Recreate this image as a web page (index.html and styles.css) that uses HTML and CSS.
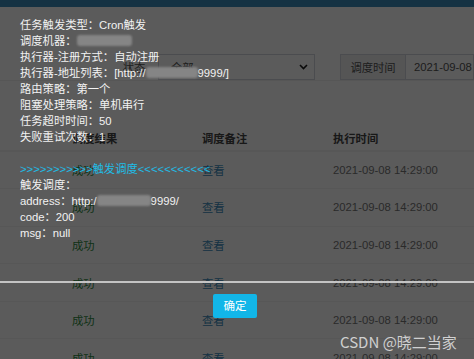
FILE: index.html
```html
<!DOCTYPE html>
<html lang="zh-CN">
<head>
    <meta charset="UTF-8">
    <meta name="viewport" content="width=device-width, initial-scale=1.0">
    <title>调度日志</title>
    <link rel="stylesheet" href="styles.css">
</head>
<body>

    <!-- 页面 (被遮罩覆盖) -->
    <div class="page">
        <div class="topbar"></div>

        <div class="filters">
            <div class="group group-status">
                <span class="addon addon-status">状态</span>
                <div class="select">
                    <span>全部</span>
                    <svg class="chevron" width="9" height="6" viewBox="0 0 9 6">
                        <path d="M1 1 L4.5 4.5 L8 1" fill="none" stroke="#1a1a1a" stroke-width="1.6"/>
                    </svg>
                </div>
            </div>
            <div class="group group-time">
                <span class="addon addon-time">调度时间</span>
                <div class="input">2021-09-08</div>
            </div>
        </div>

        <table class="log-table">
            <thead>
                <tr>
                    <th class="col-id"></th>
                    <th class="col-result">调度结果</th>
                    <th class="col-remark">调度备注</th>
                    <th>执行时间</th>
                </tr>
            </thead>
            <tbody>
                <tr><td></td><td class="ok">成功</td><td><a class="link">查看</a></td><td>2021-09-08 14:29:00</td></tr>
                <tr><td></td><td class="ok">成功</td><td><a class="link">查看</a></td><td>2021-09-08 14:29:00</td></tr>
                <tr><td></td><td class="ok">成功</td><td><a class="link">查看</a></td><td>2021-09-08 14:29:00</td></tr>
                <tr><td></td><td class="ok">成功</td><td><a class="link">查看</a></td><td>2021-09-08 14:29:00</td></tr>
                <tr><td></td><td class="ok">成功</td><td><a class="link">查看</a></td><td>2021-09-08 14:29:00</td></tr>
                <tr><td></td><td class="ok">成功</td><td><a class="link">查看</a></td><td>2021-09-08 14:29:00</td></tr>
            </tbody>
        </table>
    </div>

    <!-- 遮罩 + 弹层 -->
    <div class="shade"></div>

    <div class="layer">
        <div class="layer-content">
            任务触发类型：Cron触发<br>
            调度机器：<span class="mask mask-host"></span><br>
            执行器-注册方式：自动注册<br>
            执行器-地址列表：[http://<span class="mask mask-addr"></span>9999/]<br>
            路由策略：第一个<br>
            阻塞处理策略：单机串行<br>
            任务超时时间：50<br>
            失败重试次数：1<br>
            <br>
            <span class="trigger">&gt;&gt;&gt;&gt;&gt;&gt;&gt;&gt;&gt;&gt;&gt;触发调度&lt;&lt;&lt;&lt;&lt;&lt;&lt;&lt;&lt;&lt;&lt;</span><br>
            触发调度：<br>
            address：http:/<span class="mask mask-addr2"></span>9999/<br>
            code：200<br>
            msg：null
        </div>
        <div class="layer-footer">
            <a class="btn">确定</a>
        </div>
    </div>

    <div class="watermark">CSDN @晓二当家</div>

</body>
</html>
```

FILE: styles.css
```css
html, body {
    margin: 0;
    padding: 0;
    width: 474px;
    height: 359px;
    overflow: hidden;
}

body {
    font-family: "Liberation Sans", "Noto Sans CJK SC", sans-serif;
    font-size: 11.3px;
    background-color: #fff;
    color: #333;
    position: relative;
}

/* 页面 */
.topbar {
    height: 7px;
    background-color: #3c8dbc;
}

.filters {
    display: flex;
    margin-top: 47px;
    height: 26px;
    padding-left: 110px;
    border-bottom: 1px solid #f0f0f0;
}

.group {
    display: flex;
}

.addon {
    display: flex;
    align-items: center;
    justify-content: center;
    background-color: #eee;
    border: 1px solid #d2d6de;
    color: #555;
    box-sizing: border-box;
}

.addon-status {
    width: 48px;
    background-color: #fff;
    border-color: #fff;
}

.select {
    width: 157px;
    display: flex;
    align-items: center;
    justify-content: space-between;
    padding: 0 6px 0 12px;
    box-sizing: border-box;
    border: 1px solid #d2d6de;
    color: #555;
}

.group-time {
    margin-left: 25px;
    flex: 1;
}

.addon-time {
    width: 66px;
}

.input {
    flex: 1;
    display: flex;
    align-items: center;
    padding-left: 8px;
    border: 1px solid #d2d6de;
    border-left: none;
    color: #555;
}

.log-table {
    margin-top: 44px;
    width: 100%;
    border-collapse: collapse;
}

.log-table th {
    height: 25px;
    text-align: left;
    font-weight: bold;
    color: #444;
    padding: 0 6px;
    border-bottom: 2px solid #f4f4f4;
}

.log-table td {
    height: 37.6px;
    padding: 0 6px;
    border-top: 1px solid #f4f4f4;
    color: #777;
    box-sizing: border-box;
}

.col-id {
    width: 54px;
}

.col-result {
    width: 118px;
}

.col-remark {
    width: 119px;
}

.ok {
    color: #2e8b3e !important;
}

.link {
    color: #3c8dbc;
}

/* 遮罩 */
.shade {
    position: absolute;
    inset: 0;
    background-color: rgba(0, 0, 0, 0.645);
}

.layer {
    position: absolute;
    inset: 0;
    color: #f2f2f2;
}

.layer-content {
    height: 281px;
    box-sizing: border-box;
    padding: 17px 0 0 20px;
    line-height: 16px;
    white-space: nowrap;
}

.mask {
    display: inline-block;
    height: 11px;
    vertical-align: -1px;
    background-color: #858585;
    border-radius: 3px;
    filter: blur(1.2px);
}

.mask-host {
    width: 55px;
}

.mask-addr {
    width: 52px;
}

.mask-addr2 {
    width: 54px;
}

.trigger {
    color: #1fbbe6;
}

.layer-footer {
    border-top: 2px solid #c4c4c4;
    display: flex;
    justify-content: center;
    padding: 11px 4px 0 0;
}

.btn {
    display: block;
    width: 44px;
    height: 24px;
    line-height: 24px;
    text-align: center;
    background-color: #12b6e8;
    color: #fff;
    border-radius: 2px;
    font-size: 11.5px;
}

.watermark {
    position: absolute;
    left: 340px;
    top: 332px;
    font-family: "Noto Sans CJK SC", sans-serif;
    font-size: 15px;
    line-height: 20px;
    color: rgba(255, 255, 255, 0.72);
}
```
